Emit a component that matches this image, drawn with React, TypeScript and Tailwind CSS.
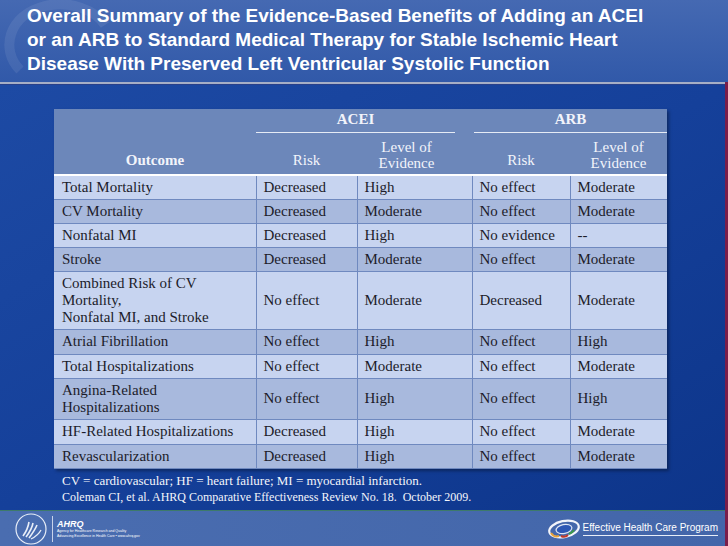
import React from 'react';

type Row = { outcome: string[]; cells: string[]; h: string };

const rows: Row[] = [
  { outcome: ['Total Mortality'], cells: ['Decreased', 'High', 'No effect', 'Moderate'], h: 'h-[24px]' },
  { outcome: ['CV Mortality'], cells: ['Decreased', 'Moderate', 'No effect', 'Moderate'], h: 'h-[24px]' },
  { outcome: ['Nonfatal MI'], cells: ['Decreased', 'High', 'No evidence', '--'], h: 'h-[24px]' },
  { outcome: ['Stroke'], cells: ['Decreased', 'Moderate', 'No effect', 'Moderate'], h: 'h-[24px]' },
  {
    outcome: ['Combined Risk of CV', 'Mortality,', 'Nonfatal MI, and Stroke'],
    cells: ['No effect', 'Moderate', 'Decreased', 'Moderate'],
    h: 'h-[58px]',
  },
  { outcome: ['Atrial Fibrillation'], cells: ['No effect', 'High', 'No effect', 'High'], h: 'h-[25px]' },
  { outcome: ['Total Hospitalizations'], cells: ['No effect', 'Moderate', 'No effect', 'Moderate'], h: 'h-[24px]' },
  { outcome: ['Angina-Related', 'Hospitalizations'], cells: ['No effect', 'High', 'No effect', 'High'], h: 'h-[41px]' },
  { outcome: ['HF-Related Hospitalizations'], cells: ['Decreased', 'High', 'No effect', 'Moderate'], h: 'h-[25px]' },
  { outcome: ['Revascularization'], cells: ['Decreased', 'High', 'No effect', 'Moderate'], h: 'h-[24px]' },
];

function HhsLogo() {
  return (
    <svg width="34" height="34" viewBox="0 0 34 34" className="shrink-0">
      <circle cx="17" cy="17" r="15" fill="none" stroke="#e8eef8" strokeWidth="1.2" />
      <path d="M9 24 C12 20 14 16 15 10 M12 25 C15 21 18 17 19 11 M15 26 C18 22 21 18 23 13" fill="none" stroke="#e8eef8" strokeWidth="1.6" />
      <path d="M17 27 C21 25 25 22 27 18" fill="none" stroke="#e8eef8" strokeWidth="1.3" />
    </svg>
  );
}

function EhcLogo() {
  return (
    <svg width="34" height="22" viewBox="0 0 34 22" className="shrink-0">
      <ellipse cx="17" cy="11" rx="15" ry="8" fill="none" stroke="#f2f4fa" strokeWidth="2.2" transform="rotate(-12 17 11)" />
      <ellipse cx="17" cy="11" rx="8" ry="4.5" fill="#2d58b5" stroke="#dfe6f5" strokeWidth="1.2" transform="rotate(-12 17 11)" />
      <path d="M4 15 C6 18 9 19 12 18" fill="none" stroke="#e6a23c" strokeWidth="2" />
      <path d="M14 18 C16 19 19 19 21 17" fill="none" stroke="#c0392b" strokeWidth="2" />
      <path d="M22 16 C24 15 26 14 27 12" fill="none" stroke="#3e9a4a" strokeWidth="2" />
    </svg>
  );
}

export default function App() {
  return (
    <div className="relative w-[728px] h-[546px] overflow-hidden flex flex-col bg-[#143f98] font-['Liberation_Serif',serif]">
      {/* right edge strip */}
      <div className="absolute right-0 top-0 bottom-0 w-[3px] bg-[#7a1e4a]" />

      {/* title band */}
      <div className="relative h-[82px] shrink-0 bg-gradient-to-b from-[#4569b2] to-[#3159a9] px-[27px] pt-[4px]">
        <svg className="absolute left-0 top-0" width="120" height="82" viewBox="0 0 120 82">
          <path d="M20 70 C0 50 8 15 45 6 C70 0 95 10 105 25" fill="none" stroke="#ffffff" strokeOpacity="0.08" strokeWidth="10" />
        </svg>
        <h1 className="relative text-white font-bold text-[19px] leading-[24px] font-['Liberation_Sans',sans-serif]">
          Overall Summary of the Evidence-Based Benefits of Adding an ACEI
          <br />
          or an ARB to Standard Medical Therapy for Stable Ischemic Heart
          <br />
          Disease With Preserved Left Ventricular Systolic Function
        </h1>
      </div>
      <div className="h-[2px] shrink-0 bg-[#a6afc6]" />
      <div className="h-[1px] shrink-0 bg-[#28408a]" />

      {/* body */}
      <div className="flex-1 bg-gradient-to-br from-[#1d4aa4] via-[#15409a] to-[#0d358a] pl-[54px] pt-[24px]">
        <table className="border-collapse table-fixed w-[613px] text-[15px] text-[#1c1c2a] shadow-[2px_2px_3px_rgba(0,0,0,0.35)]">
          <colgroup>
            <col className="w-[202px]" />
            <col className="w-[101px]" />
            <col className="w-[115px]" />
            <col className="w-[98px]" />
            <col className="w-[97px]" />
          </colgroup>
          <thead className="bg-[#6c87ba] text-[#f2f4fa]">
            <tr className="h-[24px]">
              <th />
              <th colSpan={2} className="p-0 align-bottom font-bold">
                <div className="mr-[17px] border-b border-[#e6ebf5] pb-[4px] text-center leading-[17px]">ACEI</div>
              </th>
              <th colSpan={2} className="p-0 align-bottom font-bold">
                <div className="ml-[2px] border-b border-[#e6ebf5] pb-[4px] text-center leading-[17px]">ARB</div>
              </th>
            </tr>
            <tr className="h-[42px] border-b-2 border-white">
              <th className="p-0 pb-[3px] align-bottom text-center font-bold">Outcome</th>
              <th className="p-0 pb-[3px] align-bottom text-center font-normal">Risk</th>
              <th className="p-0 pb-[3px] pr-[16px] align-bottom text-center font-normal leading-[16px]">
                Level of
                <br />
                Evidence
              </th>
              <th className="p-0 pb-[3px] align-bottom text-center font-normal">Risk</th>
              <th className="p-0 pb-[3px] align-bottom text-center font-normal leading-[16px]">
                Level of
                <br />
                Evidence
              </th>
            </tr>
          </thead>
          <tbody>
            {rows.map((r, i) => (
              <tr key={i} className={`${r.h} ${i % 2 === 0 ? 'bg-[#c7d4f0]' : 'bg-[#a8b9dd]'}`}>
                <td className="border border-[#6f89bf] border-l-0 py-0 pl-[8px] pr-1 leading-[17px]">
                  {r.outcome.map((l, j) => (
                    <div key={j}>{l}</div>
                  ))}
                </td>
                {r.cells.map((c, j) => (
                  <td key={j} className={`border border-[#6f89bf] py-0 pl-[7px] leading-[17px] ${j === 3 ? 'border-r-0' : ''}`}>
                    {c}
                  </td>
                ))}
              </tr>
            ))}
          </tbody>
        </table>
        <div className="pl-[8px] pt-[3px] text-[#f4f6fb]">
          <div className="text-[13px] leading-[17px]">CV = cardiovascular; HF = heart failure; MI = myocardial infarction.</div>
          <div className="text-[12px] leading-[17px]">Coleman CI, et al. AHRQ Comparative Effectiveness Review No. 18.&nbsp; October 2009.</div>
        </div>
      </div>

      {/* footer */}
      <div className="h-[36px] shrink-0 border-t border-[#3d7a6a] bg-gradient-to-r from-[#4a6db0] to-[#4366aa] flex items-center justify-between pl-[14px] pr-[10px]">
        <div className="flex items-center gap-[4px]">
          <HhsLogo />
          <div className="h-[26px] w-px bg-[#c8d3ea]" />
          <div className="flex flex-col text-white font-['Liberation_Sans',sans-serif]">
            <span className="text-[9px] leading-[10px] font-bold italic">AHRQ</span>
            <span className="text-[3.5px] leading-[4.5px]">Agency for Healthcare Research and Quality</span>
            <span className="text-[3.5px] leading-[4.5px]">Advancing Excellence in Health Care • www.ahrq.gov</span>
          </div>
        </div>
        <div className="flex items-center gap-[2px]">
          <EhcLogo />
          <span className="border-b border-[#e8eef8] pb-[1px] text-[10px] leading-[12px] text-white font-['Liberation_Sans',sans-serif]">
            Effective Health Care Program
          </span>
        </div>
      </div>
    </div>
  );
}
